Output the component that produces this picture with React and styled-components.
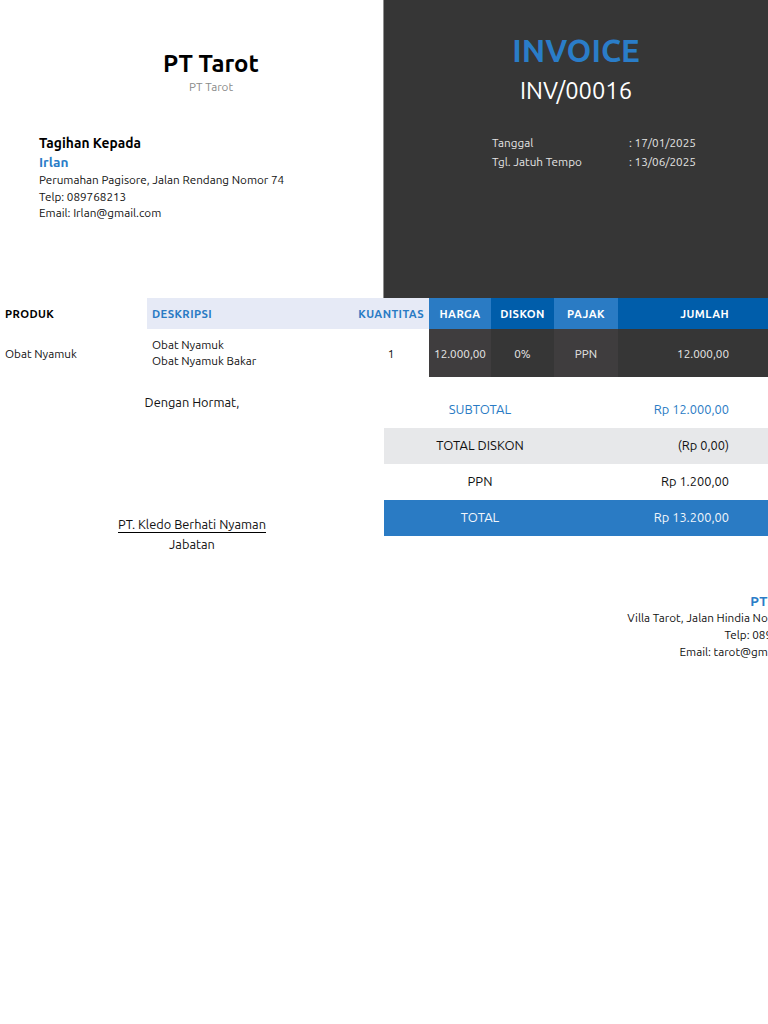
import React from 'react';
import styled, { createGlobalStyle } from 'styled-components';

const Global = createGlobalStyle`
  html, body { margin: 0; padding: 0; background: #fff; }
  body { font-family: "Ubuntu", "Noto Sans", "Open Sans", sans-serif; color: #111; }
  #root { width: 768px; height: 1024px; overflow: hidden; }
  * { box-sizing: border-box; }
`;

const Top = styled.header`
  display: grid;
  grid-template-columns: 384px 384px;
  height: 298px;
`;
const Brand = styled.section`
  padding: 50px 0 0 39px;
  border-right: 1px solid #8f8f8f;
`;
const CompanyName = styled.h1`
  margin: 0;
  text-align: center;
  font-size: 24px;
  line-height: 28px;
  font-weight: 700;
  color: #000;
`;
const CompanySub = styled.div`
  margin-top: 1px;
  text-align: center;
  font-size: 11.7px;
  line-height: 16px;
  color: #8a8a8a;
`;
const BillTitle = styled.div`
  margin-top: 39px;
  font-size: 13.8px;
  line-height: 18px;
  font-weight: 700;
  color: #000;
`;
const BillName = styled.div`
  font-size: 13.7px;
  line-height: 20px;
  font-weight: 700;
  color: #2a7dc8;
`;
const BillLine = styled.div`
  font-size: 11.7px;
  line-height: 16.6px;
`;
const Dark = styled.section`
  background: #363636;
  color: #fff;
  padding-top: 33px;
`;
const InvoiceTitle = styled.h2`
  margin: 0;
  text-align: center;
  font-size: 31.5px;
  line-height: 36px;
  font-weight: 700;
  color: #2a7dc8;
`;
const InvoiceNo = styled.div`
  margin-top: 4px;
  text-align: center;
  font-size: 23.7px;
  line-height: 34px;
`;
const Dates = styled.div`
  margin: 26px 0 0 108px;
  display: grid;
  grid-template-columns: 137px 1fr;
  grid-auto-rows: 19px;
  align-items: center;
  font-size: 11.7px;
  color: #e4e4e4;
`;

const columns = '147px 206px 76px 62px 63px 64px 150px';
const HeadRow = styled.div`
  display: grid;
  grid-template-columns: ${columns};
  height: 31px;
`;
const Head = styled.div`
  display: flex;
  align-items: center;
  justify-content: ${p => p.$align || 'center'};
  padding: ${p => p.$pad || '0'};
  background: ${p => p.$bg || 'transparent'};
  color: ${p => p.$color || '#fff'};
  font-size: 11.25px;
  font-weight: 700;
  letter-spacing: 0.4px;
`;
const BodyRow = styled.div`
  display: grid;
  grid-template-columns: ${columns};
  height: 48px;
`;
const Cell = styled.div`
  display: flex;
  flex-direction: column;
  justify-content: center;
  align-items: ${p => p.$align || 'center'};
  padding: ${p => p.$pad || '2px 0 0'};
  background: ${p => p.$bg || 'transparent'};
  color: ${p => p.$color || '#111'};
  font-size: 11.7px;
  line-height: 16px;
`;

const Lower = styled.div`
  display: grid;
  grid-template-columns: 384px 384px;
`;
const Sign = styled.section`
  display: flex;
  flex-direction: column;
  align-items: center;
  padding-top: 16px;
  font-size: 12.8px;
`;
const Regards = styled.div`
  line-height: 18px;
`;
const Signer = styled.div`
  margin-top: 105px;
  line-height: 16px;
  border-bottom: 1px solid #000;
`;
const Role = styled.div`
  line-height: 22px;
`;
const Summary = styled.section`
  padding-top: 15px;
`;
const SumRow = styled.div`
  display: grid;
  grid-template-columns: 192px 153px;
  height: 36px;
  padding-bottom: 2px;
  align-items: center;
  background: ${p => p.$bg || 'transparent'};
  color: ${p => p.$color || '#111'};
`;
const SumLabel = styled.div`
  text-align: center;
  font-size: 13px;
`;
const SumValue = styled.div`
  text-align: right;
  font-size: 12.8px;
`;

const Footer = styled.footer`
  margin: 37px -37px 0 0;
  text-align: right;
  font-size: 11.7px;
  line-height: 16.8px;
`;
const FooterName = styled.div`
  font-size: 13.7px;
  line-height: 18px;
  font-weight: 700;
  color: #2a7dc8;
`;

export default function App() {
  return (
    <>
      <Global />
      <Top>
        <Brand>
          <CompanyName>PT Tarot</CompanyName>
          <CompanySub>PT Tarot</CompanySub>
          <BillTitle>Tagihan Kepada</BillTitle>
          <BillName>Irlan</BillName>
          <BillLine>Perumahan Pagisore, Jalan Rendang Nomor 74</BillLine>
          <BillLine>Telp: 089768213</BillLine>
          <BillLine>Email: Irlan@gmail.com</BillLine>
        </Brand>
        <Dark>
          <InvoiceTitle>INVOICE</InvoiceTitle>
          <InvoiceNo>INV/00016</InvoiceNo>
          <Dates>
            <div>Tanggal</div>
            <div>: 17/01/2025</div>
            <div>Tgl. Jatuh Tempo</div>
            <div>: 13/06/2025</div>
          </Dates>
        </Dark>
      </Top>

      <HeadRow>
        <Head $align="flex-start" $pad="0 0 0 5px" $color="#000">PRODUK</Head>
        <Head $align="flex-start" $pad="0 0 0 5px" $bg="#e6eaf6" $color="#2a7bc4">DESKRIPSI</Head>
        <Head $align="flex-end" $pad="0 5px 0 0" $bg="#e6eaf6" $color="#2a7bc4">KUANTITAS</Head>
        <Head $bg="#2a7bc4">HARGA</Head>
        <Head $bg="#005daa">DISKON</Head>
        <Head $bg="#2a7bc4">PAJAK</Head>
        <Head $align="flex-end" $pad="0 39px 0 0" $bg="#005daa">JUMLAH</Head>
      </HeadRow>
      <BodyRow>
        <Cell $align="flex-start" $pad="2px 0 0 5px">Obat Nyamuk</Cell>
        <Cell $align="flex-start" $pad="0 0 0 5px">
          <div>Obat Nyamuk</div>
          <div>Obat Nyamuk Bakar</div>
        </Cell>
        <Cell>1</Cell>
        <Cell $bg="#3f3d3e" $color="#e8e8e8">12.000,00</Cell>
        <Cell $bg="#363636" $color="#e8e8e8">0%</Cell>
        <Cell $bg="#3f3d3e" $color="#e8e8e8">PPN</Cell>
        <Cell $align="flex-end" $pad="2px 39px 0 0" $bg="#363636" $color="#e8e8e8">12.000,00</Cell>
      </BodyRow>

      <Lower>
        <Sign>
          <Regards>Dengan Hormat,</Regards>
          <Signer>PT. Kledo Berhati Nyaman</Signer>
          <Role>Jabatan</Role>
        </Sign>
        <Summary>
          <SumRow $color="#2a7bc4"><SumLabel>SUBTOTAL</SumLabel><SumValue>Rp 12.000,00</SumValue></SumRow>
          <SumRow $bg="#e7e8ea"><SumLabel>TOTAL DISKON</SumLabel><SumValue>(Rp 0,00)</SumValue></SumRow>
          <SumRow><SumLabel>PPN</SumLabel><SumValue>Rp 1.200,00</SumValue></SumRow>
          <SumRow $bg="#2a7bc4" $color="#f2f6fb"><SumLabel>TOTAL</SumLabel><SumValue>Rp 13.200,00</SumValue></SumRow>
        </Summary>
      </Lower>

      <Footer>
        <FooterName>PT Tarot</FooterName>
        <div>Villa Tarot, Jalan Hindia Nomor 10</div>
        <div>Telp: 08976821</div>
        <div>Email: tarot@gmail.com</div>
      </Footer>
    </>
  );
}
